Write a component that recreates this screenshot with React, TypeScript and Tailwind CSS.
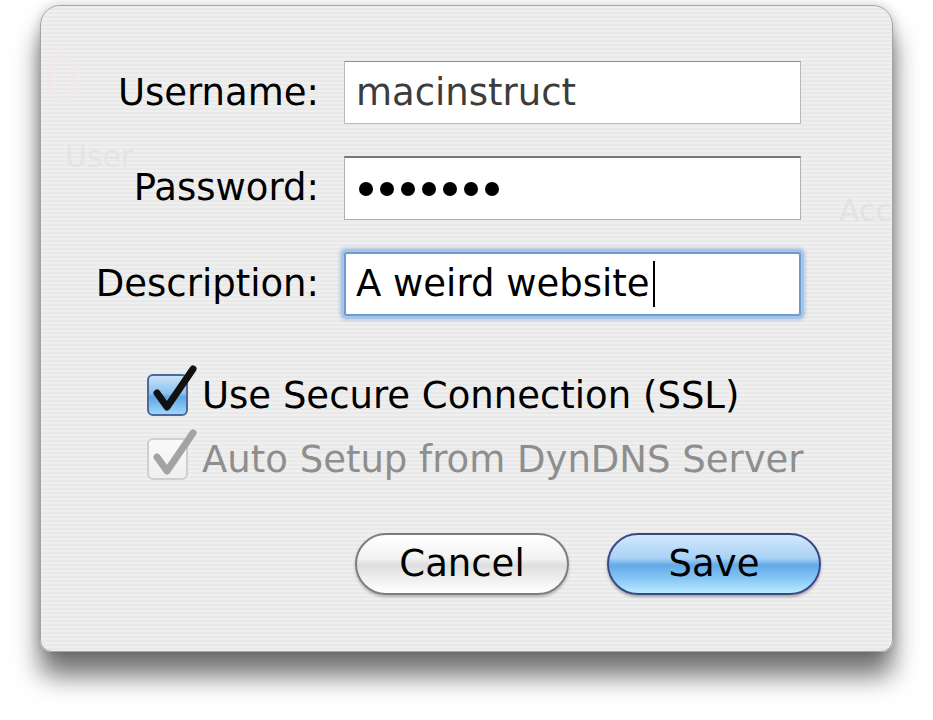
const font = "font-['DejaVu_Sans',Verdana,sans-serif]";

function CheckMark({ color }: { color: string }) {
  return (
    <svg
      className="absolute left-[3px] top-[-10px] h-[48px] w-[44px] overflow-visible"
      viewBox="0 0 44 48"
      fill="none"
    >
      <path
        d="M5 27 L15 41 L41 3"
        stroke={color}
        strokeWidth={7}
        strokeLinecap="round"
        strokeLinejoin="round"
      />
    </svg>
  );
}

function Checkbox({ label, disabled }: { label: string; disabled?: boolean }) {
  return (
    <div className="flex h-[42px] items-center gap-[14px]">
      <div
        className={
          disabled
            ? "relative h-[42px] w-[41px] rounded-[6px] border-2 border-[#cfcfcf] bg-[linear-gradient(to_bottom,#fafafa,#efefef)]"
            : "relative h-[42px] w-[41px] rounded-[6px] border-2 border-[#4a6a9c] bg-[linear-gradient(to_bottom,#c9e2f8_0%,#8cc2ef_45%,#5ea6e4_55%,#9fd6fb_100%)]"
        }
      >
        <CheckMark color={disabled ? "#a3a3a3" : "#111"} />
      </div>
      <span className={disabled ? "leading-none text-[#8e8e8e]" : "leading-none text-black"}>
        {label}
      </span>
    </div>
  );
}

export default function App() {
  return (
    <div className={`h-[720px] w-[933px] bg-white pl-[40px] pt-[5px] ${font}`}>
      <div className="relative h-[647px] w-[853px] overflow-hidden rounded-t-[20px] rounded-b-[12px] border border-[#a4a4a4] bg-[repeating-linear-gradient(to_bottom,#efefef_0px,#efefef_2px,#e9e9e9_2px,#e9e9e9_4px)] shadow-[0_24px_26px_rgba(0,0,0,0.55),0_0_12px_rgba(0,0,0,0.2)]">
        {/* faint window content behind the sheet */}
        <div className="absolute left-[6px] top-[48px] h-[48px] w-[30px] rounded-full border-[5px] border-[#f2e6e3] opacity-50 blur-[1px]" />
        <span className="absolute left-[24px] top-[128px] text-[30px] text-[#e4e4e4]">User</span>
        <span className="absolute left-[798px] top-[182px] text-[30px] text-[#e2e2e2]">Acc</span>

        <div className="grid grid-cols-[278px_457px] items-center gap-x-[25px] gap-y-[32px] pt-[55px] text-[37px] text-black">
          <span className="text-right">Username:</span>
          <div className="flex h-[63px] items-center border border-[#b8b8b8] border-t-[#8e8e8e] bg-white px-[11px] text-[#3c3c3c]">
            macinstruct
          </div>
          <span className="text-right">Password:</span>
          <div className="flex h-[64px] items-center gap-[7px] border border-[#b0b0b0] border-t-2 border-t-[#777] bg-white px-[14px]">
            {Array.from({ length: 7 }).map((_, i) => (
              <span key={i} className="h-[14px] w-[14px] rounded-full bg-black" />
            ))}
          </div>
          <span className="text-right">Description:</span>
          <div className="flex h-[64px] items-center rounded-[3px] border-2 border-[#6d9ad0] bg-white px-[10px] shadow-[0_0_0_3px_#a6c4e6,0_0_3px_5px_rgba(120,160,210,0.35)]">
            A weird website
            <span className="ml-[3px] h-[46px] w-[2px] bg-black" />
          </div>
        </div>

        <div className="mt-[58px] flex flex-col gap-[22px] pl-[106px] text-[37px]">
          <Checkbox label="Use Secure Connection (SSL)" />
          <Checkbox label="Auto Setup from DynDNS Server" disabled />
        </div>

        <div className="mt-[53px] flex justify-end gap-[38px] pr-[71px] text-[37px] text-black">
          <button className="flex h-[62px] w-[214px] items-center justify-center rounded-full border-2 border-[#7d7d7d] bg-[linear-gradient(to_bottom,#ffffff_0%,#f3f3f3_40%,#dedede_52%,#efefef_75%,#ffffff_100%)] shadow-[0_2px_3px_rgba(0,0,0,0.25)]">
            Cancel
          </button>
          <button className="flex h-[62px] w-[214px] items-center justify-center rounded-full border-2 border-[#3a4785] bg-[linear-gradient(to_bottom,#d2e8fb_0%,#a8d2f5_40%,#62aae8_52%,#86c6f5_75%,#b9ecff_100%)] shadow-[0_2px_3px_rgba(0,0,0,0.3)]">
            Save
          </button>
        </div>
      </div>
    </div>
  );
}
